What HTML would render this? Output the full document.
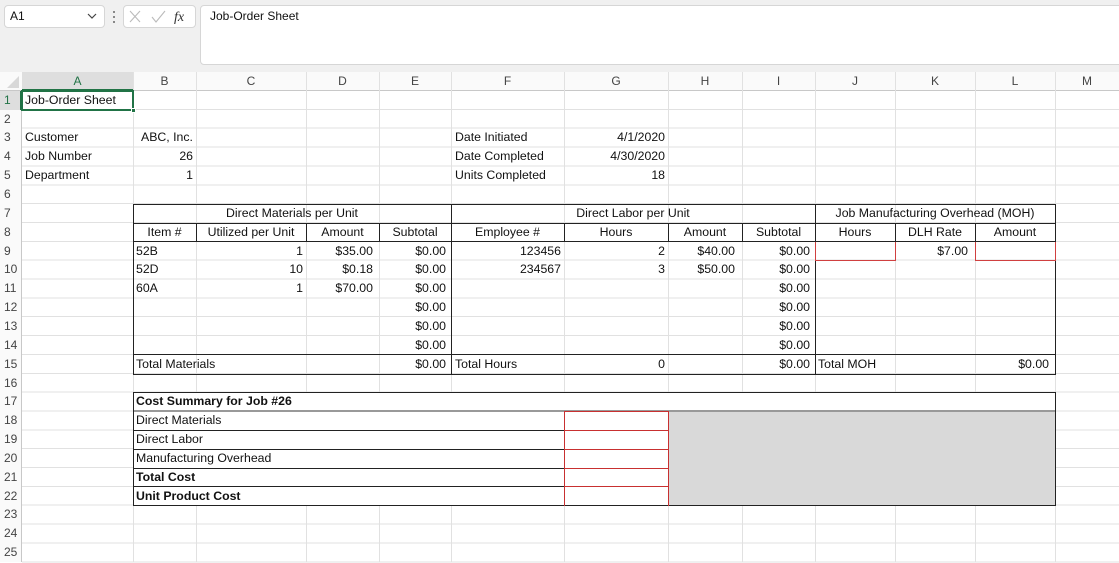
<!DOCTYPE html>
<html><head><meta charset="utf-8"><style>
*{margin:0;padding:0;box-sizing:border-box}
body{width:1119px;height:562px;overflow:hidden;background:#fff;font-family:"Liberation Sans",sans-serif;position:relative}
.a{position:absolute}
.c{position:absolute;height:19px;line-height:19px;font-size:12.3px;color:#111;white-space:nowrap;padding:0 3px}
.r{text-align:right}
.m{text-align:center}
.b{font-weight:bold}
.vl{position:absolute;width:1px;background:#e1e1e1;top:72px;height:490px}
.k{position:absolute;background:#222}
.rh{position:absolute;left:0;width:22px;height:19px;line-height:19px;font-size:12px;color:#444;padding-left:4px}
.ch{position:absolute;top:72px;height:19px;line-height:19px;font-size:12px;color:#444;text-align:center}
</style></head><body>
<!-- top toolbar -->
<div class="a" style="left:0;top:0;width:1119px;height:72px;background:#f0f0f0"></div>
<div class="a" style="left:4px;top:5px;width:101px;height:23px;background:#fff;border:1px solid #d6d6d6;border-radius:4px"></div>
<div class="c" style="left:7px;top:7px;font-size:12px">A1</div>
<svg class="a" style="left:87px;top:13px" width="10" height="7"><path d="M1 1L5 5L9 1" stroke="#444" stroke-width="1.2" fill="none"/></svg>
<div class="a" style="left:113px;top:11px;width:2px;height:2px;background:#888"></div>
<div class="a" style="left:113px;top:16px;width:2px;height:2px;background:#888"></div>
<div class="a" style="left:113px;top:21px;width:2px;height:2px;background:#888"></div>
<div class="a" style="left:123px;top:5px;width:73px;height:23px;background:#fff;border:1px solid #d6d6d6;border-radius:4px"></div>
<svg class="a" style="left:129px;top:10px" width="60" height="14"><path d="M1 1L11 12M11 1L1 12" stroke="#bbb" stroke-width="1.1"/><path d="M23 7L27 12L36 1" stroke="#bbb" stroke-width="1.1" fill="none"/><text x="45" y="11" font-family="Liberation Serif" font-style="italic" font-size="14" fill="#333">fx</text></svg>
<div class="a" style="left:200px;top:5px;width:925px;height:60px;background:#fff;border:1px solid #d6d6d6;border-radius:4px"></div>
<div class="c" style="left:207px;top:7px;font-size:12px">Job-Order Sheet</div>
<!-- headers -->
<div class="a" style="left:0;top:72px;width:1119px;height:19px;background:#fafafa;border-bottom:1px solid #c8c8c8"></div>
<div class="a" style="left:22px;top:72px;width:111px;height:19px;background:#dedede;border-bottom:2px solid #217346"></div>
<div class="a" style="left:0;top:91px;width:22px;height:471px;background:#fafafa;border-right:1px solid #c8c8c8"></div>
<div class="a" style="left:0;top:91px;width:22px;height:19px;background:#dedede;border-right:2px solid #217346"></div>
<svg class="a" style="left:6px;top:76px" width="14" height="13"><path d="M13 0L13 12L1 12Z" fill="#d8d8d8"/></svg>
<div class="ch" style="left:22px;width:111px;color:#217346">A</div>
<div class="ch" style="left:133px;width:63px">B</div>
<div class="ch" style="left:196px;width:110px">C</div>
<div class="ch" style="left:306px;width:73px">D</div>
<div class="ch" style="left:379px;width:72px">E</div>
<div class="ch" style="left:451px;width:113px">F</div>
<div class="ch" style="left:564px;width:104px">G</div>
<div class="ch" style="left:668px;width:74px">H</div>
<div class="ch" style="left:742px;width:73px">I</div>
<div class="ch" style="left:815px;width:80px">J</div>
<div class="ch" style="left:895px;width:80px">K</div>
<div class="ch" style="left:975px;width:80px">L</div>
<div class="ch" style="left:1055px;width:64px">M</div>
<!-- gridlines -->
<div class="a" style="left:22px;top:90.7px;width:1097px;height:472px;background:repeating-linear-gradient(to bottom,transparent 0,transparent 17.85px,#e1e1e1 17.85px,#e1e1e1 18.85px)"></div>
<div class="vl" style="left:133px"></div><div class="vl" style="left:196px"></div><div class="vl" style="left:306px"></div><div class="vl" style="left:379px"></div><div class="vl" style="left:451px"></div><div class="vl" style="left:564px"></div><div class="vl" style="left:668px"></div><div class="vl" style="left:742px"></div><div class="vl" style="left:815px"></div><div class="vl" style="left:895px"></div><div class="vl" style="left:975px"></div><div class="vl" style="left:1055px"></div>
<!-- row numbers -->
<div class="rh" style="top:91px;color:#217346">1</div><div class="rh" style="top:109.6px">2</div><div class="rh" style="top:128.4px">3</div><div class="rh" style="top:147.3px">4</div><div class="rh" style="top:166.1px">5</div><div class="rh" style="top:185px">6</div><div class="rh" style="top:203.8px">7</div><div class="rh" style="top:222.7px">8</div><div class="rh" style="top:241.5px">9</div><div class="rh" style="top:260.4px">10</div><div class="rh" style="top:279.2px">11</div><div class="rh" style="top:298px">12</div><div class="rh" style="top:316.9px">13</div><div class="rh" style="top:335.8px">14</div><div class="rh" style="top:354.6px">15</div><div class="rh" style="top:373.5px">16</div><div class="rh" style="top:392.3px">17</div><div class="rh" style="top:411.2px">18</div><div class="rh" style="top:430px">19</div><div class="rh" style="top:448.9px">20</div><div class="rh" style="top:467.7px">21</div><div class="rh" style="top:486.6px">22</div><div class="rh" style="top:505.4px">23</div><div class="rh" style="top:524.3px">24</div><div class="rh" style="top:543.1px">25</div>
<!-- gray fill summary -->
<div class="a" style="left:668px;top:411px;width:387px;height:95px;background:#d9d9d9"></div>
<div class="a" style="left:133px;top:393px;width:922px;height:18px;background:#fff"></div>
<div class="a" style="left:134px;top:411px;width:430px;height:95px;background:#fff"></div>
<div class="a" style="left:564px;top:411px;width:104px;height:95px;background:#fff"></div>
<!-- table 1 borders -->
<div class="a" style="left:133px;top:203.5px;width:923px;height:171px;border:1px solid #222"></div>
<div class="k" style="left:451px;top:204px;width:1px;height:170px"></div>
<div class="k" style="left:815px;top:204px;width:1px;height:170px"></div>
<div class="k" style="left:133px;top:222.5px;width:922px;height:1px"></div>
<div class="k" style="left:133px;top:241.3px;width:922px;height:1px"></div>
<div class="k" style="left:133px;top:354.4px;width:922px;height:1px"></div>
<div class="k" style="left:196px;top:223px;width:1px;height:19px"></div><div class="k" style="left:306px;top:223px;width:1px;height:19px"></div><div class="k" style="left:379px;top:223px;width:1px;height:19px"></div><div class="k" style="left:564px;top:223px;width:1px;height:19px"></div><div class="k" style="left:668px;top:223px;width:1px;height:19px"></div><div class="k" style="left:742px;top:223px;width:1px;height:19px"></div><div class="k" style="left:895px;top:223px;width:1px;height:19px"></div><div class="k" style="left:975px;top:223px;width:1px;height:19px"></div>
<div class="a" style="left:815px;top:241.5px;width:81px;height:19.5px;border:1px solid #d04040;border-top:none"></div>
<div class="a" style="left:975px;top:241.5px;width:81px;height:19.5px;border:1px solid #d04040;border-top:none"></div>
<!-- table 2 borders -->
<div class="a" style="left:133px;top:392px;width:923px;height:114px;border:1px solid #222"></div>
<div class="a" style="left:134px;top:410px;width:921px;height:2px;background:#999"></div>
<div class="k" style="left:133px;top:429.8px;width:431px;height:1px"></div>
<div class="k" style="left:133px;top:448.7px;width:431px;height:1px"></div>
<div class="k" style="left:133px;top:467.5px;width:431px;height:1px"></div>
<div class="k" style="left:133px;top:486.4px;width:431px;height:1px"></div>
<div class="a" style="left:564px;top:411px;width:105px;height:95px;border:1px solid #c83030;border-bottom:none"></div>
<div class="a" style="left:564px;top:429.8px;width:105px;height:1px;background:#c83030"></div>
<div class="a" style="left:564px;top:448.7px;width:105px;height:1px;background:#c83030"></div>
<div class="a" style="left:564px;top:467.5px;width:105px;height:1px;background:#c83030"></div>
<div class="a" style="left:564px;top:486.4px;width:105px;height:1px;background:#c83030"></div>
<!-- A1 selection -->
<div class="a" style="left:21px;top:90px;width:113px;height:21px;border:2px solid #217346"></div>
<div class="a" style="left:131px;top:108px;width:5px;height:5px;background:#217346;border:1px solid #fff"></div>
<!-- text -->
<div class="c" style="left:22px;top:91px">Job-Order Sheet</div>
<div class="c" style="left:22px;top:128.4px">Customer</div>
<div class="c" style="left:22px;top:147.3px">Job Number</div>
<div class="c" style="left:22px;top:166.1px">Department</div>
<div class="c" style="left:138px;top:128.4px">ABC, Inc.</div>
<div class="c r" style="left:133px;width:63px;top:147.3px">26</div>
<div class="c r" style="left:133px;width:63px;top:166.1px">1</div>
<div class="c" style="left:452px;top:128.4px">Date Initiated</div>
<div class="c" style="left:452px;top:147.3px">Date Completed</div>
<div class="c" style="left:452px;top:166.1px">Units Completed</div>
<div class="c r" style="left:564px;width:104px;top:128.4px">4/1/2020</div>
<div class="c r" style="left:564px;width:104px;top:147.3px">4/30/2020</div>
<div class="c r" style="left:564px;width:104px;top:166.1px">18</div>
<div class="c m" style="left:133px;width:318px;top:203.8px">Direct Materials per Unit</div>
<div class="c m" style="left:451px;width:364px;top:203.8px">Direct Labor per Unit</div>
<div class="c m" style="left:815px;width:240px;top:203.8px">Job Manufacturing Overhead (MOH)</div>
<div class="c m" style="left:133px;width:63px;top:222.7px">Item #</div>
<div class="c m" style="left:196px;width:110px;top:222.7px">Utilized per Unit</div>
<div class="c m" style="left:306px;width:73px;top:222.7px">Amount</div>
<div class="c m" style="left:379px;width:72px;top:222.7px">Subtotal</div>
<div class="c m" style="left:451px;width:113px;top:222.7px">Employee #</div>
<div class="c m" style="left:564px;width:104px;top:222.7px">Hours</div>
<div class="c m" style="left:668px;width:74px;top:222.7px">Amount</div>
<div class="c m" style="left:742px;width:73px;top:222.7px">Subtotal</div>
<div class="c m" style="left:815px;width:80px;top:222.7px">Hours</div>
<div class="c m" style="left:895px;width:80px;top:222.7px">DLH Rate</div>
<div class="c m" style="left:975px;width:80px;top:222.7px">Amount</div>
<div class="c" style="left:133px;top:241.5px">52B</div>
<div class="c" style="left:133px;top:260.4px">52D</div>
<div class="c" style="left:133px;top:279.2px">60A</div>
<div class="c r" style="left:196px;width:110px;top:241.5px">1</div>
<div class="c r" style="left:196px;width:110px;top:260.4px">10</div>
<div class="c r" style="left:196px;width:110px;top:279.2px">1</div>
<div class="c r" style="left:306px;width:70px;top:241.5px">$35.00</div>
<div class="c r" style="left:306px;width:70px;top:260.4px">$0.18</div>
<div class="c r" style="left:306px;width:70px;top:279.2px">$70.00</div>
<div class="c r" style="left:379px;width:70px;top:241.5px">$0.00</div>
<div class="c r" style="left:379px;width:70px;top:260.4px">$0.00</div>
<div class="c r" style="left:379px;width:70px;top:279.2px">$0.00</div>
<div class="c r" style="left:379px;width:70px;top:298px">$0.00</div>
<div class="c r" style="left:379px;width:70px;top:316.9px">$0.00</div>
<div class="c r" style="left:379px;width:70px;top:335.8px">$0.00</div>
<div class="c r" style="left:379px;width:70px;top:354.6px">$0.00</div>
<div class="c r" style="left:451px;width:113px;top:241.5px">123456</div>
<div class="c r" style="left:451px;width:113px;top:260.4px">234567</div>
<div class="c r" style="left:564px;width:104px;top:241.5px">2</div>
<div class="c r" style="left:564px;width:104px;top:260.4px">3</div>
<div class="c r" style="left:564px;width:104px;top:354.6px">0</div>
<div class="c r" style="left:668px;width:70px;top:241.5px">$40.00</div>
<div class="c r" style="left:668px;width:70px;top:260.4px">$50.00</div>
<div class="c r" style="left:742px;width:71px;top:241.5px">$0.00</div>
<div class="c r" style="left:742px;width:71px;top:260.4px">$0.00</div>
<div class="c r" style="left:742px;width:71px;top:279.2px">$0.00</div>
<div class="c r" style="left:742px;width:71px;top:298px">$0.00</div>
<div class="c r" style="left:742px;width:71px;top:316.9px">$0.00</div>
<div class="c r" style="left:742px;width:71px;top:335.8px">$0.00</div>
<div class="c r" style="left:742px;width:71px;top:354.6px">$0.00</div>
<div class="c r" style="left:895px;width:76px;top:241.5px">$7.00</div>
<div class="c" style="left:133px;top:354.6px">Total Materials</div>
<div class="c" style="left:452px;top:354.6px">Total Hours</div>
<div class="c" style="left:815px;top:354.6px">Total MOH</div>
<div class="c r" style="left:975px;width:77px;top:354.6px">$0.00</div>
<div class="c b" style="left:133px;top:392.3px">Cost Summary for Job #26</div>
<div class="c" style="left:133px;top:411.2px">Direct Materials</div>
<div class="c" style="left:133px;top:430px">Direct Labor</div>
<div class="c" style="left:133px;top:448.9px">Manufacturing Overhead</div>
<div class="c b" style="left:133px;top:467.7px">Total Cost</div>
<div class="c b" style="left:133px;top:486.6px">Unit Product Cost</div>
</body></html>
